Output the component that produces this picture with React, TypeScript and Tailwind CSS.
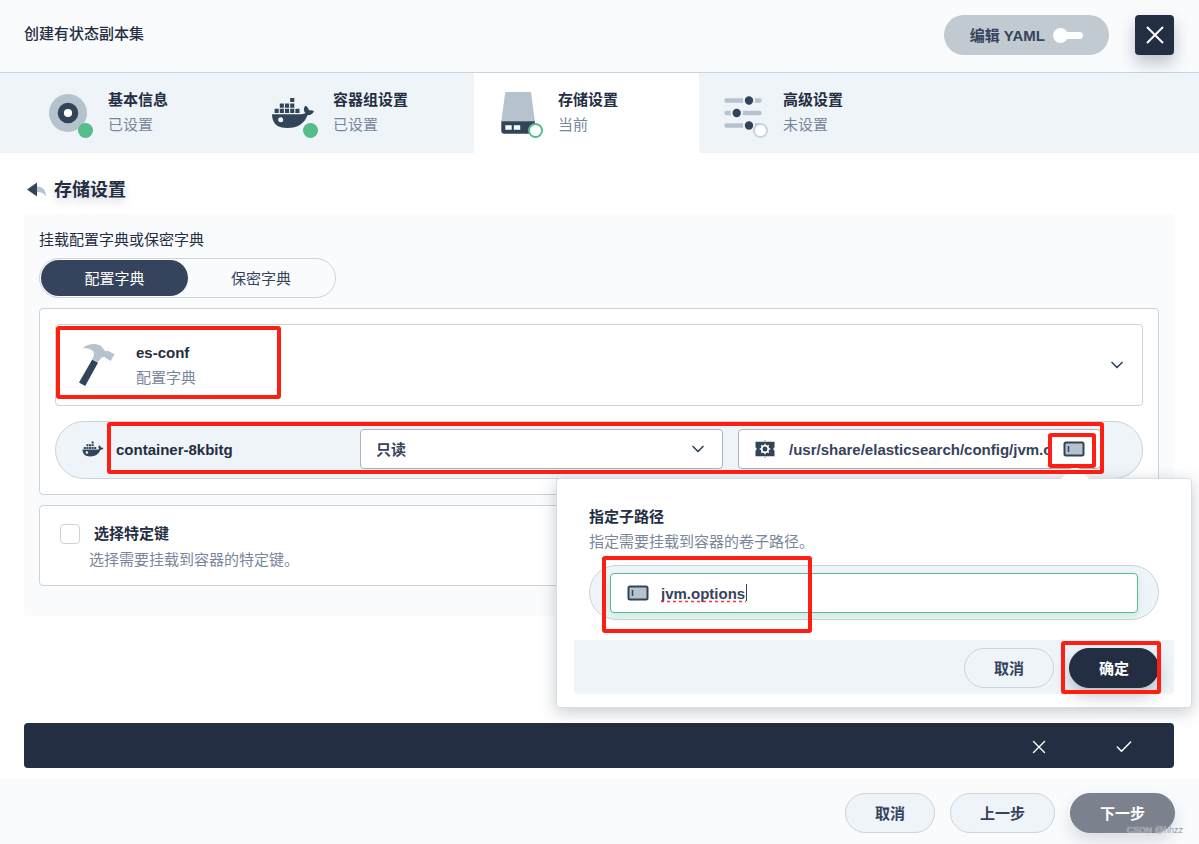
import React from "react";
import { Check, ChevronDown, X } from "lucide-react";

function DockerIcon({ className }: { className: string }) {
  return (
    <svg viewBox="0 0 48 48" className={className} fill="#324558" aria-hidden="true">
      <path d="M21.2 9h4.1v4.1h-4.1zM10.8 14.6h4.1v4.1h-4.1zM16 14.6h4.1v4.1H16zM21.2 14.6h4.1v4.1h-4.1zM5.6 19.8h4.1v4.1H5.6zM10.8 19.8h4.1v4.1h-4.1zM16 19.8h4.1v4.1H16zM21.2 19.8h4.1v4.1h-4.1zM26.4 19.8h4.1v4.1h-4.1z" />
      <path
        fillRule="evenodd"
        d="M3 25.2h29.5c1.8 0 3-.5 3.9-1.2-2-2-2.1-4.8-.2-7.3 2.2 1 3.5 2.6 3.8 4.600 1.800-.300 3.600 0 5 .900-1.200 2.500-3.400 3.900-6.500 4C35.600 34.300 28.600 39 18.500 39 8.500 39 3 34.500 3 25.200zM11.700 28.300a2.500 2.500 0 1 0 0 5 2.500 2.500 0 0 0 0-5z"
      />
    </svg>
  );
}

function BasicIcon() {
  return (
    <svg viewBox="0 0 48 48" className="size-12" aria-hidden="true">
      <circle cx="24" cy="24" r="19" fill="#b6c2cd" />
      <circle cx="24" cy="24" r="7.200" fill="#fff" stroke="#324558" strokeWidth="6.200" />
    </svg>
  );
}

function StorageIcon() {
  return (
    <svg viewBox="0 0 48 48" className="size-12" aria-hidden="true">
      <path d="M11.300 3H37l3.900 29.500H7.300z" fill="#b6c2cd" />
      <path d="M7.300 32.300h33.600v9.400a3 3 0 0 1-3 3H10.300a3 3 0 0 1-3-3z" fill="#324558" />
      <path d="M11.300 36.200h6.400v4.500h-6.400zM19.800 36.200h6.400v4.500h-6.400z" fill="#fff" />
    </svg>
  );
}

function SlidersIcon() {
  return (
    <svg viewBox="0 0 48 48" className="size-12" aria-hidden="true">
      <path d="M7.500 11.500h33M7.500 24h33M7.500 36.500h33" stroke="#b6c2cd" strokeWidth="4.400" strokeLinecap="round" />
      <g fill="#324558" stroke="#eff4f9" strokeWidth="2">
        <circle cx="30" cy="11.500" r="5.200" />
        <circle cx="17.700" cy="24" r="5.200" />
        <circle cx="30" cy="36.500" r="5.200" />
      </g>
    </svg>
  );
}

function HammerIcon() {
  return (
    <svg viewBox="0 0 48 48" className="size-12" aria-hidden="true">
      <path d="M10.700 7.300C14 4 18 3 21.300 3c2.700 0 5.700.5 7.400 1.700C30.500 6 31.500 8.500 33 9.700c1 .8 2 .5 3 0l6.500 3.600-3.800 6.700-4.200-2.500c-1.500-1.500-3-1.700-4-1.300-1.500.8-3 2.300-4.500 5.100L20.200 18c1.300-2.500 2.300-4.500 1.800-6.200C21 9 17 7 10.700 7.300z" fill="#b6c2cd" />
      <path d="M20.200 18.400l5.800 3.300L13.200 45 7 41.400z" fill="#324558" />
    </svg>
  );
}

function BackIcon() {
  return (
    <svg viewBox="0 0 20 16" className="h-4 w-5" aria-hidden="true">
      <path d="M10 4.500c5.500.2 9 3.500 9 9.800-2-3.300-5-4.400-9-4.300z" fill="#b6c2cd" />
      <path d="M0 7.500L10 .5v14z" fill="#324558" />
    </svg>
  );
}

function MountIcon() {
  return (
    <svg viewBox="0 0 20 20" className="size-5 shrink-0" aria-hidden="true">
      <path d="M.5 2.700h19v6.100h-1v2.400h1v6.100H.5v-6.100h1V8.800h-1z" fill="#324558" />
      <path d="M9 1h2v1.700H9zM9 17.300h2V19H9z" fill="#b6c2cd" />
      <circle cx="10" cy="10" r="3.300" fill="none" stroke="#fff" strokeWidth="1.600" />
      <path d="M10 4.700v2M10 13.300v2M4.700 10h2M13.300 10h2M6.300 6.300l1.400 1.400M12.300 12.300l1.400 1.400M13.700 6.300l-1.400 1.400M7.700 12.300l-1.400 1.400" stroke="#fff" strokeWidth="1.500" />
    </svg>
  );
}

function FieldIcon() {
  return (
    <svg viewBox="0 0 22 16" className="h-4 w-[22px] shrink-0" aria-hidden="true">
      <rect x="1.500" y="1.500" width="19" height="13" rx="1.500" fill="#b6c2cd" stroke="#324558" strokeWidth="2" />
      <path d="M5.500 5v6" stroke="#324558" strokeWidth="1.500" />
    </svg>
  );
}

function Mark({ className }: { className: string }) {
  return <div className={`pointer-events-none absolute z-30 rounded-[3px] border-4 border-[#ff1e12] ${className}`} />;
}

const steps = [
  { title: "基本信息", state: "已设置", icon: <BasicIcon />, dot: "bg-[#55bc8a]", active: false },
  { title: "容器组设置", state: "已设置", icon: <DockerIcon className="size-12" />, dot: "bg-[#55bc8a]", active: false },
  { title: "存储设置", state: "当前", icon: <StorageIcon />, dot: "border-2 border-[#55bc8a] bg-white", active: true },
  { title: "高级设置", state: "未设置", icon: <SlidersIcon />, dot: "border-2 border-[#ccd3db] bg-white", active: false },
];

const pill = "h-10 rounded-full border px-[29px] font-bold";
const plain = "border-[#ccd3db] bg-[#eff4f9] text-[#36435c]";

export default function App() {
  return (
    <div className="flex min-h-screen flex-col bg-white font-['Liberation_Sans','Noto_Sans_CJK_SC',sans-serif] text-[15px] leading-[25px] text-[#242e42]">
      <header className="flex items-start justify-between border-b border-[#ccd3db] bg-[#f9fbfd] pt-[15px] pr-[25px] pb-[17px] pl-6">
        <h1 className="leading-[38px] font-medium">创建有状态副本集</h1>
        <div className="flex gap-[26px]">
          <button className="flex h-10 items-center gap-2 rounded-full bg-[#c1c9d1] px-[26px] font-bold text-[#36435c]">
            编辑 YAML
            <span className="flex w-[30px] items-center">
              <span className="size-[15px] rounded-full bg-white" />
              <span className="-ml-1 h-[7px] flex-1 rounded-full bg-white" />
            </span>
          </button>
          <button aria-label="关闭" className="flex h-10 w-[39px] items-center justify-center rounded bg-[#242e42] text-white shadow-[0_8px_16px_0_rgba(36,46,66,0.28)]">
            <X size={30} strokeWidth={1.500} />
          </button>
        </div>
      </header>

      <nav className="flex bg-[#eff4f9] pl-6">
        {steps.map((s) => (
          <a key={s.title} href="#" className={`flex h-20 w-[225px] items-center gap-4 pl-5 ${s.active ? "bg-white" : ""}`}>
            <span className="relative">
              {s.icon}
              <span className={`absolute -right-px -bottom-px size-[15px] rounded-full ${s.dot}`} />
            </span>
            <span className="pb-0.5">
              <span className="block font-bold">{s.title}</span>
              <span className="block text-[#79879c]">{s.state}</span>
            </span>
          </a>
        ))}
      </nav>

      <main className="flex flex-1 flex-col pt-[25px] pr-[25px] pb-[10px] pl-6">
        <h2 className="mb-3 flex items-center gap-[7px] pl-[3px] text-lg leading-6 font-bold [text-shadow:0_4px_8px_rgba(36,46,66,0.2)]">
          <BackIcon />
          存储设置
        </h2>

        <section className="rounded bg-[#f9fbfd] px-[15px] pt-[15px] pb-[30px]">
          <p className="leading-[22px]">挂载配置字典或保密字典</p>
          <div className="mt-[7px] inline-flex h-10 rounded-full border border-[#ccd3db] p-px align-top">
            <button className="w-[147px] rounded-full bg-[#36435c] text-white">配置字典</button>
            <button className="w-[146px] rounded-full text-[#36435c]">保密字典</button>
          </div>

          <div className="mt-[10px] flex flex-col gap-[15px] rounded border border-[#ccd3db] bg-white p-[15px]">
            <div className="relative flex items-center gap-4 rounded border border-[#ccd3db] py-[15px] pr-[15px] pl-4">
              <HammerIcon />
              <div className="flex-1">
                <div className="font-bold">es-conf</div>
                <div className="text-[#79879c]">配置字典</div>
              </div>
              <ChevronDown size={20} className="text-[#324558]" />
              <Mark className="top-px left-0 h-[73px] w-[225px]" />
            </div>

            <div className="relative flex items-center rounded-full border border-[#ccd3db] bg-[#eff4f9] pt-[7px] pb-[9px] pr-[41px] pl-[25px]">
              <DockerIcon className="size-6 shrink-0" />
              <div className="w-[255px] shrink-0 pl-[11px] font-bold">container-8kbitg</div>
              <div className="grid flex-1 grid-cols-2 gap-[15px]">
                <div className="relative">
                  <select aria-label="访问模式" className="h-10 w-full appearance-none rounded border border-[#abb4be] bg-white px-[15px] font-bold text-[#36435c]">
                    <option>只读</option>
                  </select>
                  <ChevronDown size={20} className="pointer-events-none absolute top-[10px] right-[15px] text-[#324558]" />
                </div>
                <div className="flex h-10 min-w-0 items-center rounded border border-[#abb4be] bg-white pr-[15px] pl-4">
                  <MountIcon />
                  <input aria-label="挂载路径" defaultValue="/usr/share/elasticsearch/config/jvm.options" className="ml-[14px] w-0 flex-1 bg-transparent font-bold text-[#36435c] outline-none" />
                  <button aria-label="指定子路径" className="pl-[14px]">
                    <FieldIcon />
                  </button>
                </div>
              </div>
              <Mark className="top-0 right-[38px] left-[51px] h-[52px]" />
              <Mark className="top-[11px] right-[46px] h-[35px] w-12" />

              <div className="absolute top-14 -right-[50px] z-20 w-[636px] rounded border border-[#d8dee5] bg-white px-[17px] pt-[25px] pb-[13px] shadow-[0_4px_16px_0_rgba(36,46,66,0.25)]">
                <span className="absolute -top-[10px] right-[106px] size-5 rotate-45 bg-white" />
                <div className="relative px-[15px]">
                  <label htmlFor="subpath" className="block font-bold">指定子路径</label>
                  <p className="text-[#79879c]">指定需要挂载到容器的卷子路径。</p>
                  <div className="mt-[11px] rounded-full border border-[#ccd3db] bg-[#eff4f9] px-5 pt-[7px] pb-[6px]">
                    <div className="relative flex h-10 items-center gap-3 rounded border border-[#55bc8a] bg-white px-4 shadow-[0_4px_8px_0_rgba(85,188,138,0.2)]">
                      <FieldIcon />
                      <input id="subpath" spellCheck={false} defaultValue="jvm.options" className="w-0 flex-1 bg-transparent font-bold text-[#36435c] outline-none" />
                      <svg className="pointer-events-none absolute top-[10px] left-[50px] h-5 w-[88px]" viewBox="0 0 88 20" fill="none" aria-hidden="true">
                        <path d="M0 17.500H85" stroke="#f0343c" strokeWidth="1.500" strokeDasharray="3 3" />
                        <path d="M85.500 0v17" stroke="#36435c" />
                      </svg>
                    </div>
                  </div>
                </div>
                <div className="relative mt-5 flex justify-end gap-[15px] rounded-b bg-[#eff4f9] px-[15px] pt-2 pb-[6px]">
                  <button className={`${pill} ${plain}`}>取消</button>
                  <button className={`${pill} border-[#242e42] bg-[#242e42] text-white shadow-[0_8px_16px_0_rgba(36,46,66,0.28)]`}>确定</button>
                </div>
                <Mark className="top-[77px] left-[45px] h-[77px] w-[210px]" />
                <Mark className="top-[162px] right-[30px] h-[53px] w-[100px]" />
              </div>
            </div>
          </div>

          <div className="mt-[10px] rounded border border-[#ccd3db] bg-white px-5 pt-[15px] pb-[13px]">
            <label className="flex items-center gap-[14px] font-bold">
              <input type="checkbox" className="size-5 appearance-none rounded-sm border border-[#ccd3db] bg-white" />
              选择特定键
            </label>
            <p className="mt-px pl-[29px] text-[#79879c]">选择需要挂载到容器的特定键。</p>
          </div>
        </section>

        <div className="mt-auto flex h-[45px] items-center justify-end gap-16 rounded bg-[#242e42] pt-0.5 pr-10 text-white">
          <button aria-label="放弃">
            <X size={22} strokeWidth={1.500} />
          </button>
          <button aria-label="保存">
            <Check size={20} strokeWidth={1.800} />
          </button>
        </div>
      </main>

      <footer className="relative flex justify-end gap-[15px] bg-[#f9fbfd] px-6 pt-[15px] pb-[11px]">
        <button className={`${pill} ${plain}`}>取消</button>
        <button className={`${pill} ${plain}`}>上一步</button>
        <button className={`${pill} border-[#7c818e] bg-[#7c818e] text-white shadow-[0_8px_16px_0_rgba(36,46,66,0.15)]`}>下一步</button>
        <span className="absolute right-4 bottom-2 text-[9px] leading-3 text-[#8f949e] [text-shadow:0_0_1px_#fff]">CSDN @hhzz</span>
      </footer>
    </div>
  );
}
